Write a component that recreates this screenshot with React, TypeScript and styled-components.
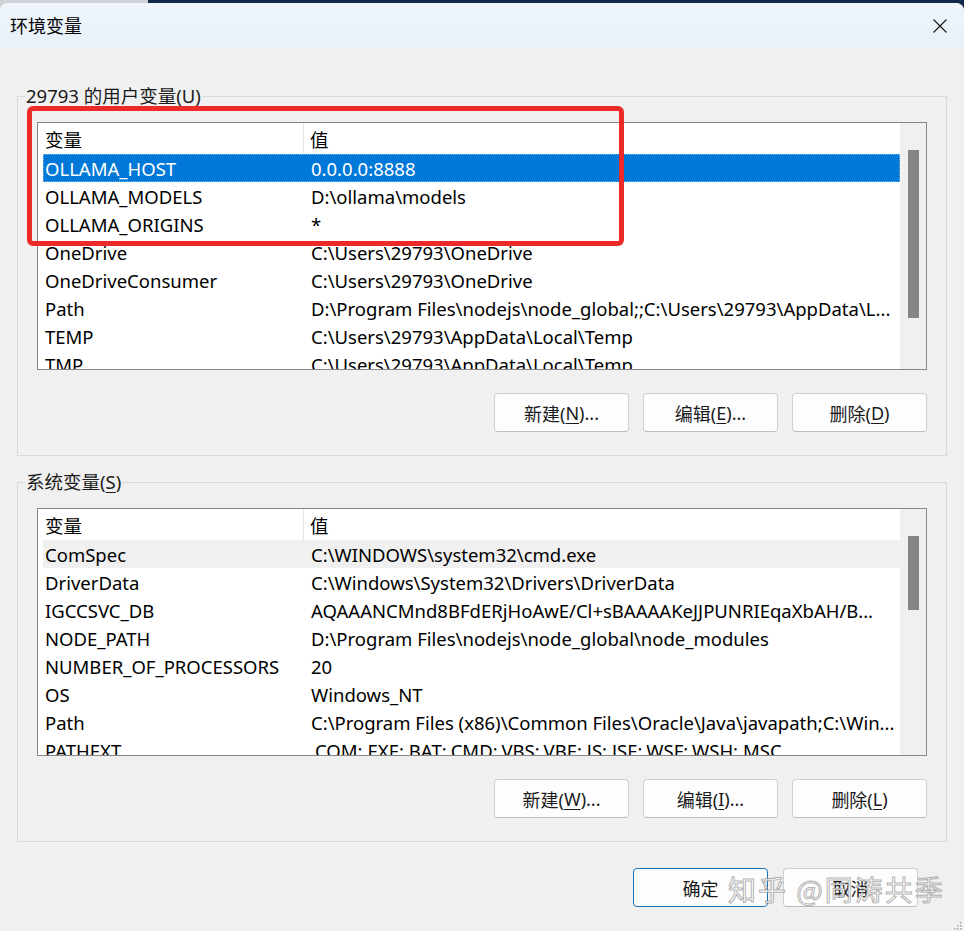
import React from "react";
import styled, { createGlobalStyle } from "styled-components";

const GlobalStyle = createGlobalStyle`
  html, body { margin: 0; padding: 0; }
  body {
    width: 964px;
    height: 931px;
    overflow: hidden;
    font-family: "Noto Sans", "Noto Sans CJK SC", sans-serif;
    color: #000;
  }
`;

const FONT = `"Noto Sans", "Noto Sans CJK SC", sans-serif`;

const Backdrop = styled.div`
  position: relative;
  width: 964px;
  height: 931px;
  display: flex;
  flex-direction: column;
  background: linear-gradient(to right, #cfd3d8 0, #cfd3d8 148px, #13284a 148px);
  overflow: hidden;
`;

const BackStrip = styled.div`
  height: 3px;
  flex: none;
`;

const Window = styled.div`
  flex: 1;
  display: flex;
  flex-direction: column;
  background: #f0f0f0;
  border-radius: 8px 8px 0 0;
  overflow: hidden;
`;

const TitleBar = styled.div`
  height: 44px;
  flex: none;
  display: flex;
  align-items: center;
  justify-content: space-between;
  padding: 0 16px 0 10px;
  background: linear-gradient(#eef5fb, #e8f1f8);
`;

const Title = styled.div`
  font-family: ${FONT};
  font-size: 18px;
  line-height: 24px;
  margin-top: 1px;
`;

const CloseIcon = styled.svg`
  width: 16px;
  height: 16px;
  display: block;
  margin-top: 1px;
`;

const Body = styled.div`
  flex: 1;
  display: flex;
  flex-direction: column;
  padding: 37px 17px 0 17px;
`;

const Group = styled.fieldset<{ $top?: number }>`
  margin: ${(p) => p.$top ?? 0}px 0 0 0;
  padding: 0 19px 23px 19px;
  border: 1px solid #d9d9d9;
  border-radius: 0;
  min-width: 0;
  display: flex;
  flex-direction: column;
`;

const Legend = styled.legend`
  margin-left: -12px;
  padding: 0 1px;
  font-family: ${FONT};
  font-size: 18.5px;
  line-height: 24px;
  color: #1a1a1a;
`;

const Key = styled.span`
  text-decoration: underline;
  text-underline-offset: 3px;
  text-decoration-thickness: 1px;
`;

const ListBox = styled.div`
  margin-top: 14px;
  height: 248px;
  box-sizing: border-box;
  border: 1px solid #868686;
  display: flex;
  background: #fff;
`;

const ListContent = styled.div`
  flex: 1;
  min-width: 0;
  display: flex;
  flex-direction: column;
  overflow: hidden;
`;

const HeaderRow = styled.div`
  height: 31px;
  flex: none;
  display: flex;
  align-items: stretch;
`;

const HeaderCell = styled.div<{ $w?: number; $pad: number }>`
  ${(p) => (p.$w ? `width: ${p.$w}px; flex: none; border-right: 1px solid #e5e5e5;` : "flex: 1;")}
  padding-left: ${(p) => p.$pad}px;
  display: flex;
  align-items: center;
  font-family: ${FONT};
  font-size: 18.5px;
  box-sizing: border-box;
`;

const Row = styled.div<{ $state?: "selected" | "hover" }>`
  height: 28px;
  flex: none;
  margin-left: 5px;
  display: flex;
  align-items: center;
  box-sizing: border-box;
  font-family: ${FONT};
  font-size: 18.5px;
  white-space: nowrap;
  background: ${(p) =>
    p.$state === "selected" ? "#0078d7" : p.$state === "hover" ? "#f0f0f0" : "transparent"};
  color: ${(p) => (p.$state === "selected" ? "#fff" : "#000")};
  border: 1px dotted ${(p) => (p.$state === "selected" ? "#7fb4e4" : "transparent")};
`;

const NameCell = styled.div`
  width: 260px;
  flex: none;
  padding-left: 1px;
  overflow: hidden;
`;

const ValueCell = styled.div`
  flex: 1;
  min-width: 0;
  padding-left: 6px;
  overflow: hidden;
`;

const ScrollTrack = styled.div`
  width: 26px;
  flex: none;
  background: #f0f0f0;
  display: flex;
  justify-content: center;
`;

const ScrollThumb = styled.div<{ $offset: number; $len: number }>`
  width: 11px;
  margin-top: ${(p) => p.$offset}px;
  height: ${(p) => p.$len}px;
  background: #858585;
  margin-left: 1px;
`;

const ButtonRow = styled.div<{ $top: number; $gap: number }>`
  display: flex;
  justify-content: flex-end;
  gap: ${(p) => p.$gap}px;
  margin-top: ${(p) => p.$top}px;
`;

const Button = styled.button<{ $primary?: boolean }>`
  width: 135px;
  height: 39px;
  box-sizing: border-box;
  background: #fdfdfd;
  border: 1px solid ${(p) => (p.$primary ? "#1a73b8" : "#d0d0d0")};
  border-bottom-color: ${(p) => (p.$primary ? "#1a73b8" : "#bdbdbd")};
  border-radius: 4px;
  font-family: ${FONT};
  font-size: 18px;
  color: #1a1a1a;
  padding: 0;
  display: flex;
  align-items: center;
  justify-content: center;
`;

const Footer = styled.div`
  display: flex;
  justify-content: flex-end;
  gap: 15px;
  margin-top: 26px;
  padding-right: 29px;
`;

const Highlight = styled.div`
  position: absolute;
  left: 27px;
  top: 106px;
  width: 597px;
  height: 140px;
  box-sizing: border-box;
  border: 5px solid #ec2a2a;
  border-radius: 6px;
  pointer-events: none;
`;

const Watermark = styled.div`
  position: absolute;
  left: 728px;
  top: 870px;
  font-family: "Noto Sans CJK SC", sans-serif;
  font-size: 28px;
  line-height: 38px;
  letter-spacing: 2px;
  color: rgba(255, 255, 255, 0.85);
  -webkit-text-stroke: 1px rgba(110, 110, 110, 0.55);
  white-space: nowrap;
  pointer-events: none;
`;

const Grip = styled.svg`
  position: absolute;
  right: 2px;
  bottom: 1px;
  width: 10px;
  height: 10px;
`;

type Item = { name: string; value: string; state?: "selected" | "hover" };

const userVars: Item[] = [
  { name: "OLLAMA_HOST", value: "0.0.0.0:8888", state: "selected" },
  { name: "OLLAMA_MODELS", value: "D:\\ollama\\models" },
  { name: "OLLAMA_ORIGINS", value: "*" },
  { name: "OneDrive", value: "C:\\Users\\29793\\OneDrive" },
  { name: "OneDriveConsumer", value: "C:\\Users\\29793\\OneDrive" },
  { name: "Path", value: "D:\\Program Files\\nodejs\\node_global;;C:\\Users\\29793\\AppData\\L..." },
  { name: "TEMP", value: "C:\\Users\\29793\\AppData\\Local\\Temp" },
  { name: "TMP", value: "C:\\Users\\29793\\AppData\\Local\\Temp" },
];

const sysVars: Item[] = [
  { name: "ComSpec", value: "C:\\WINDOWS\\system32\\cmd.exe", state: "hover" },
  { name: "DriverData", value: "C:\\Windows\\System32\\Drivers\\DriverData" },
  { name: "IGCCSVC_DB", value: "AQAAANCMnd8BFdERjHoAwE/Cl+sBAAAAKeJJPUNRIEqaXbAH/B..." },
  { name: "NODE_PATH", value: "D:\\Program Files\\nodejs\\node_global\\node_modules" },
  { name: "NUMBER_OF_PROCESSORS", value: "20" },
  { name: "OS", value: "Windows_NT" },
  { name: "Path", value: "C:\\Program Files (x86)\\Common Files\\Oracle\\Java\\javapath;C:\\Win..." },
  { name: "PATHEXT", value: ".COM;.EXE;.BAT;.CMD;.VBS;.VBE;.JS;.JSE;.WSF;.WSH;.MSC" },
];

function VarList({ items, thumbLen }: { items: Item[]; thumbLen: number }) {
  return (
    <ListBox>
      <ListContent>
        <HeaderRow>
          <HeaderCell $w={266} $pad={7}>变量</HeaderCell>
          <HeaderCell $pad={6}>值</HeaderCell>
        </HeaderRow>
        {items.map((it) => (
          <Row key={it.name + it.value} $state={it.state}>
            <NameCell>{it.name}</NameCell>
            <ValueCell>{it.value}</ValueCell>
          </Row>
        ))}
      </ListContent>
      <ScrollTrack>
        <ScrollThumb $offset={27} $len={thumbLen} />
      </ScrollTrack>
    </ListBox>
  );
}

export default function App() {
  return (
    <>
      <GlobalStyle />
      <Backdrop>
        <BackStrip />
        <Window>
          <TitleBar>
            <Title>环境变量</Title>
            <CloseIcon viewBox="0 0 16 16">
              <path d="M1.5 1.5 L14.5 14.5 M14.5 1.5 L1.5 14.5" stroke="#1a1a1a" strokeWidth="1.2" fill="none" />
            </CloseIcon>
          </TitleBar>
          <Body>
            <Group>
              <Legend>
                29793 的用户变量(<Key>U</Key>)
              </Legend>
              <VarList items={userVars} thumbLen={168} />
              <ButtonRow $top={23} $gap={14}>
                <Button>新建(<Key>N</Key>)...</Button>
                <Button>编辑(<Key>E</Key>)...</Button>
                <Button>删除(<Key>D</Key>)</Button>
              </ButtonRow>
            </Group>
            <Group $top={14}>
              <Legend>
                系统变量(<Key>S</Key>)
              </Legend>
              <VarList items={sysVars} thumbLen={74} />
              <ButtonRow $top={23} $gap={14}>
                <Button>新建(<Key>W</Key>)...</Button>
                <Button>编辑(<Key>I</Key>)...</Button>
                <Button>删除(<Key>L</Key>)</Button>
              </ButtonRow>
            </Group>
            <Footer>
              <Button $primary>确定</Button>
              <Button>取消</Button>
            </Footer>
          </Body>
        </Window>
        <Highlight />
        <Watermark>知乎 @同涛共季</Watermark>
        <Grip viewBox="0 0 10 10">
          <rect x="8" y="2" width="1.5" height="1.5" fill="#a0a0a0" />
          <rect x="5" y="5" width="1.5" height="1.5" fill="#a0a0a0" />
          <rect x="8" y="5" width="1.5" height="1.5" fill="#a0a0a0" />
          <rect x="2" y="8" width="1.5" height="1.5" fill="#a0a0a0" />
          <rect x="5" y="8" width="1.5" height="1.5" fill="#a0a0a0" />
          <rect x="8" y="8" width="1.5" height="1.5" fill="#a0a0a0" />
        </Grip>
      </Backdrop>
    </>
  );
}
